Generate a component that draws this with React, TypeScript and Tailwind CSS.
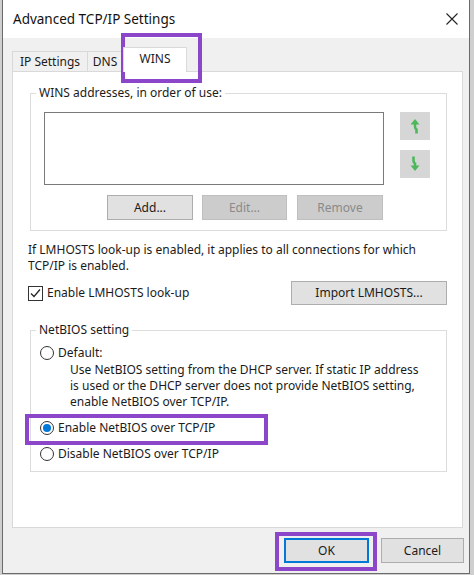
import React from "react";

function Radio({ checked }: { checked?: boolean }) {
  return (
    <span className="w-[14px] h-[14px] rounded-full border border-[#333] bg-white flex items-center justify-center shrink-0">
      {checked && <span className="w-[8px] h-[8px] rounded-full bg-[#0078d7]" />}
    </span>
  );
}

function UpArrow() {
  return (
    <svg width="10" height="16" viewBox="0 0 10 16">
      <polygon points="0.5,6.5 5,1 9.5,6.5" fill="#4cb85a" />
      <path d="M5 6 V8.5 Q5 10.5 6.5 11.5 V15.5" stroke="#4cb85a" strokeWidth="2.6" fill="none" />
    </svg>
  );
}

function DownArrow() {
  return (
    <svg width="10" height="16" viewBox="0 0 10 16">
      <path d="M3.5 0.5 V4.5 Q3.5 6.5 5 7.5 V10" stroke="#4cb85a" strokeWidth="2.6" fill="none" />
      <polygon points="0.5,9.5 5,15 9.5,9.5" fill="#4cb85a" />
    </svg>
  );
}

export default function App() {
  return (
    <div className="relative w-[474px] h-[575px] overflow-hidden bg-[#cfcfcf] pl-[2px] font-[Noto_Sans,sans-serif] text-[12px] text-[#1b1b1b] leading-[16px] whitespace-nowrap">
      <div className="w-[468px] h-[574px] border-l border-r border-b border-[#6b6b6b] bg-[#f0f0f0] flex flex-col">
        {/* Title bar */}
        <div className="h-[38px] shrink-0 bg-white flex items-center justify-between pl-[10px] pr-[11px]">
          <span className="text-[13.5px] leading-[20px] text-[#111]">Advanced TCP/IP Settings</span>
          <svg width="12" height="12" viewBox="0 0 12 12">
            <path d="M0.5 0.5 L11.5 11.5 M11.5 0.5 L0.5 11.5" stroke="#222" strokeWidth="1.1" />
          </svg>
        </div>

        {/* Tabs */}
        <div className="h-[33px] shrink-0 flex items-end pl-[9px]">
          <div className="h-[20px] w-[76px] border border-b-0 border-[#d9d9d9] bg-[#f0f0f0] flex items-center justify-center">
            IP Settings
          </div>
          <div className="h-[20px] w-[35px] border border-l-0 border-b-0 border-[#d9d9d9] bg-[#f0f0f0] flex items-center justify-center">
            DNS
          </div>
          <div className="relative z-10 -mb-px h-[25px] w-[64px] border border-b-0 border-[#d9d9d9] bg-white flex items-center justify-center pb-[2px]">
            WINS
          </div>
        </div>

        {/* Panel */}
        <div className="ml-[9px] w-[451px] h-[457px] shrink-0 border border-[#d9d9d9] bg-white flex flex-col">
          {/* WINS group */}
          <div className="relative mt-[21px] ml-[17px] w-[417px] h-[138px] border border-[#dcdcdc] pt-[18px] pl-[13px]">
            <span className="absolute -top-[9px] left-[5px] bg-white px-[3px] leading-[16px]">
              WINS addresses, in order of use:
            </span>
            <div className="flex">
              <div className="w-[340px] h-[73px] border border-[#7a7a7a] bg-white" />
              <div className="ml-[16px] flex flex-col gap-[10px]">
                <div className="w-[30px] h-[28px] bg-[#d6d6d6] flex items-center justify-center">
                  <UpArrow />
                </div>
                <div className="w-[30px] h-[28px] bg-[#d6d6d6] flex items-center justify-center">
                  <DownArrow />
                </div>
              </div>
            </div>
            <div className="mt-[10px] pl-[63px] flex">
              <div className="w-[86px] h-[25px] border border-[#adadad] bg-[#e1e1e1] flex items-center justify-center">
                Add...
              </div>
              <div className="ml-[9px] w-[85px] h-[25px] border border-[#bfbfbf] bg-[#cccccc] text-[#8a8a8a] flex items-center justify-center">
                Edit...
              </div>
              <div className="ml-[10px] w-[86px] h-[25px] border border-[#bfbfbf] bg-[#cccccc] text-[#8a8a8a] flex items-center justify-center">
                Remove
              </div>
            </div>
          </div>

          {/* LMHOSTS text */}
          <div className="mt-[11px] ml-[15px] leading-[16px]">
            <div>If LMHOSTS look-up is enabled, it applies to all connections for which</div>
            <div>TCP/IP is enabled.</div>
          </div>

          {/* Checkbox row */}
          <div className="mt-[7px] ml-[15px] mr-[15px] h-[24px] flex items-center justify-between">
            <div className="flex items-center">
              <span className="w-[15px] h-[15px] border border-[#333] bg-white flex items-center justify-center">
                <svg width="11" height="11" viewBox="0 0 11 11">
                  <path d="M1 5.5 L4 8.5 L10 1.5" stroke="#222" strokeWidth="1.2" fill="none" />
                </svg>
              </span>
              <span className="ml-[4px]">Enable LMHOSTS look-up</span>
            </div>
            <div className="w-[156px] h-[24px] border border-[#adadad] bg-[#e1e1e1] flex items-center justify-center">
              Import LMHOSTS...
            </div>
          </div>

          {/* NetBIOS group */}
          <div className="relative mt-[25px] ml-[17px] w-[417px] border border-[#dcdcdc] pt-[14px] pl-[9px] pb-[9px]">
            <span className="absolute -top-[9px] left-[5px] bg-white px-[3px] leading-[16px]">NetBIOS setting</span>
            <div className="h-[16px] flex items-center">
              <Radio />
              <span className="ml-[4px]">Default:</span>
            </div>
            <div className="mt-[1px] pl-[30px] leading-[16px]">
              <div>Use NetBIOS setting from the DHCP server. If static IP address</div>
              <div>is used or the DHCP server does not provide NetBIOS setting,</div>
              <div>enable NetBIOS over TCP/IP.</div>
            </div>
            <div className="mt-[10px] h-[16px] flex items-center">
              <Radio checked />
              <span className="ml-[4px]">Enable NetBIOS over TCP/IP</span>
            </div>
            <div className="mt-[10px] h-[16px] flex items-center">
              <Radio />
              <span className="ml-[4px]">Disable NetBIOS over TCP/IP</span>
            </div>
          </div>
        </div>

        {/* Footer */}
        <div className="flex justify-end pt-[10px] pr-[5px]">
          <div className="w-[85px] h-[25px] border-2 border-[#0078d7] bg-[#e1e1e1] flex items-center justify-center">
            OK
          </div>
          <div className="ml-[12px] w-[83px] h-[25px] border border-[#adadad] bg-[#e1e1e1] flex items-center justify-center">
            Cancel
          </div>
        </div>
      </div>

      {/* Purple highlight overlays */}
      <div className="absolute left-[121px] top-[33px] w-[81px] h-[50px] border-[4px] border-[#8b46c9]" />
      <div className="absolute left-[25px] top-[414px] w-[243px] h-[31px] border-[4px] border-[#8b46c9]" />
      <div className="absolute left-[275px] top-[532px] w-[102px] h-[39px] border-[4px] border-[#8b46c9]" />
    </div>
  );
}
